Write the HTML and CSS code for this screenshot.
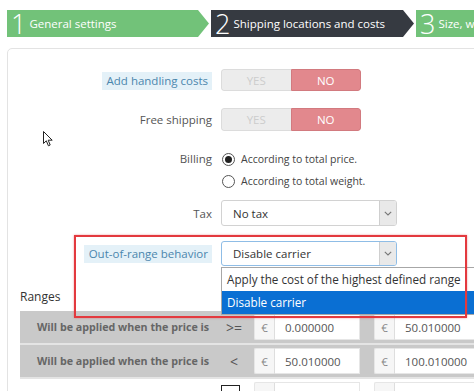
FILE: index.html
```html
<!DOCTYPE html>
<html>
<head>
<meta charset="utf-8">
<link rel="stylesheet" href="styles.css">
</head>
<body>
<div class="steps">
  <div class="step step-done step-first"><span class="num">1</span><span class="lbl">General settings</span></div>
  <div class="step step-cur"><span class="num">2</span><span class="lbl">Shipping locations and costs</span></div>
  <div class="step step-done step-last"><span class="num">3</span><span class="lbl">Size, w</span></div>
</div>

<div class="panel">
  <div class="row row-handling">
    <div class="lab"><span class="hint">Add handling costs</span></div>
    <div class="ctl"><div class="switch"><span class="yes">YES</span><span class="no">NO</span></div></div>
  </div>
  <div class="row row-free">
    <div class="lab">Free shipping</div>
    <div class="ctl"><div class="switch"><span class="yes">YES</span><span class="no">NO</span></div></div>
  </div>
  <div class="row row-billing">
    <div class="lab lab-top">Billing</div>
    <div class="ctl radios">
      <label class="radio"><span class="dot checked"></span>According to total price.</label>
      <label class="radio"><span class="dot"></span>According to total weight.</label>
    </div>
  </div>
  <div class="row row-tax">
    <div class="lab">Tax</div>
    <div class="ctl"><div class="select"><span class="val">No tax</span><span class="caret"><svg width="8" height="5" viewBox="0 0 8 5"><path d="M0.8 0.8 L4 4 L7.2 0.8" fill="none" stroke="#777" stroke-width="1.1"/></svg></span></div></div>
  </div>
  <div class="row row-oor">
    <div class="lab"><span class="hint">Out-of-range behavior</span></div>
    <div class="ctl">
      <div class="select select-focus"><span class="val">Disable carrier</span><span class="caret"><svg width="8" height="5" viewBox="0 0 8 5"><path d="M0.8 0.8 L4 4 L7.2 0.8" fill="none" stroke="#777" stroke-width="1.1"/></svg></span>
        <div class="dropdown">
          <div class="opt">Apply the cost of the highest defined range</div>
          <div class="opt opt-sel">Disable carrier</div>
        </div>
      </div>
    </div>
  </div>

  <div class="ranges-title">Ranges</div>
  <div class="ranges">
    <div class="rrow">
      <div class="rlab">Will be applied when the price is</div>
      <div class="rop">&gt;=</div>
      <div class="igroup"><span class="addon">€</span><span class="inp">0.000000</span></div>
      <div class="igroup ig2"><span class="addon">€</span><span class="inp">50.010000</span></div>
    </div>
    <div class="rrow">
      <div class="rlab">Will be applied when the price is</div>
      <div class="rop">&lt;</div>
      <div class="igroup"><span class="addon">€</span><span class="inp">50.010000</span></div>
      <div class="igroup ig2"><span class="addon">€</span><span class="inp">100.010000</span></div>
    </div>
    <div class="rrow rrow-plain">
      <div class="rlab"></div>
      <div class="rop rop-check"><span class="check"></span></div>
      <div class="igroup"><span class="addon"></span><span class="inp"></span></div>
      <div class="igroup ig2"><span class="addon"></span><span class="inp"></span></div>
    </div>
  </div>
</div>

<div class="annot"></div>
<svg class="cursor" width="11" height="16" viewBox="0 0 11 16"><path d="M0.5 0.5 L0.5 12.5 L3.3 9.8 L5.4 14.8 L7.2 14 L5.2 9.2 L9.2 9.2 Z" fill="#fff" stroke="#222" stroke-width="1"/></svg>
</body>
</html>
```

FILE: styles.css
```css
html, body {
  margin: 0;
  padding: 0;
  overflow: hidden;
  background: #fff;
}
body {
  font-family: "Open Sans", "Liberation Sans", sans-serif;
  font-size: 11.5px;
  color: #555;
  width: 474px;
  height: 391px;
  position: relative;
}

/* steps */
.steps {
  display: flex;
  gap: 1px;
  padding: 10px 0 0 7px;
  height: 27px;
  white-space: nowrap;
}
.step {
  flex: none;
  height: 27px;
  display: flex;
  align-items: center;
  color: #fff;
  padding-left: 4px;
  box-sizing: border-box;
  clip-path: polygon(0 0, calc(100% - 11px) 0, 100% 50%, calc(100% - 11px) 100%, 0 100%);
}
.step-done { background: #72c279; }
.step-cur { background: #363a41; }
.step-first { width: 202px; }
.step-cur { width: 203px; margin-left: 1px; }
.step-last { width: 60px; clip-path: none; margin-left: 1px; }
.num {
  font-size: 27px;
  font-weight: 300;
  line-height: 27px;
  margin-right: 3px;
}
.lbl { font-size: 11.5px; }

/* panel */
.panel {
  margin: 11px 0 0 7px;
  width: 520px;
  border: 1px solid #e3e3e3;
  border-radius: 5px;
  padding-top: 20px;
  height: 400px;
  box-sizing: border-box;
}
.row {
  display: flex;
  align-items: center;
}
.lab {
  width: 204px;
  text-align: right;
  color: #555;
  flex: none;
}
.lab-top { align-self: flex-start; line-height: 22px; }
.ctl { margin-left: 9px; }
.hint {
  background: #e4f1f8;
  color: #4b86ad;
  padding: 1px 4px 2px 5px;
}
.row-handling { height: 22px; }
.row-free { height: 23px; margin-top: 17px; }
.row-billing { margin-top: 17px; align-items: flex-start; }
.row-tax { height: 26px; margin-top: 8px; }
.row-oor { height: 25px; margin-top: 15px; }

.switch {
  display: flex;
  width: 140px;
  height: 22px;
  border-radius: 3px;
  overflow: hidden;
  font-size: 11.5px;
}
.row-free .switch { height: 23px; }
.switch .yes {
  flex: 1;
  background: #ececec;
  color: #cdcdcd;
  border: 1px solid #dcdcdc;
  border-right: none;
  border-radius: 3px 0 0 3px;
  display: flex; align-items: center; justify-content: center;
}
.switch .no {
  flex: 1;
  background: #e2888d;
  color: #fff;
  border: 1px solid #d27a7f;
  border-radius: 0 3px 3px 0;
  display: flex; align-items: center; justify-content: center;
}

.radios { display: flex; flex-direction: column; }
.radio {
  display: flex;
  align-items: center;
  height: 22px;
  color: #444;
  font-size: 10.5px;
}
.dot {
  width: 11px;
  height: 11px;
  border: 1px solid #555;
  border-radius: 50%;
  margin: 0 6px 0 1px;
  position: relative;
  background: #fff;
}
.dot.checked::after {
  content: "";
  position: absolute;
  left: 2px; top: 2px;
  width: 7px; height: 7px;
  border-radius: 50%;
  background: #222;
}

.select {
  position: relative;
  width: 176px;
  height: 26px;
  box-sizing: border-box;
  border: 1px solid #d2d2d2;
  border-radius: 3px;
  background: #fff;
  display: flex;
  align-items: center;
  color: #333;
}
.row-oor .select { height: 25px; }
.select .val { flex: 1; padding-left: 11px; }
.select .caret {
  width: 16px;
  height: 100%;
  background: #e9e9e9;
  border-left: 1px solid #cfcfcf;
  display: flex; align-items: center; justify-content: center;
  border-radius: 0 2px 2px 0;
}
.select-focus { border-color: #8fbde6; }
.dropdown {
  position: absolute;
  left: -1px;
  top: 25px;
  width: 256px;
  background: #fff;
  border: 1px solid #a7a7a7;
  border-right: none;
  font-size: 11.7px;
  color: #333;
}
.opt { height: 23px; line-height: 23px; padding-left: 5px; white-space: nowrap; }
.opt-sel { background: #0a6fd3; color: #fff; }

/* ranges */
.ranges-title {
  margin: 23px 0 0 12px;
  line-height: 16px;
  color: #333;
  font-size: 12px;
}
.ranges {
  margin: 6px 0 0 12px;
}
.rrow {
  display: flex;
  align-items: center;
  height: 32px;
  background: #c9c9c9;
  border-bottom: 2px solid #e4e4e4;
}
.rrow-plain { background: #fff; border: none; align-items: flex-start; padding-top: 3px; }
.rlab {
  width: 179px;
  padding-left: 17px;
  font-weight: 700;
  font-size: 10.7px;
  color: #666;
  flex: none;
  white-space: nowrap;
}
.rop {
  width: 36px;
  flex: none;
  text-align: center;
  color: #555;
  font-size: 14px;
}
.rop-check { text-align: left; }
.igroup {
  display: flex;
  height: 26px;
  margin-left: 2px;
  flex: none;
}
.ig2 { margin-left: 14px; }
.addon {
  width: 19px;
  background: #f6f6f6;
  color: #888;
  border: 1px solid #e6e6e6;
  border-right: 1px solid #dedede;
  display: flex; align-items: center; justify-content: center;
  border-radius: 2px 0 0 2px;
}
.inp {
  width: 74px;
  background: #fff;
  border: 1px solid #e6e6e6;
  border-left: none;
  padding-left: 10px;
  display: flex; align-items: center;
  color: #555;
}
.ig2 .inp { width: 90px; }
.check {
  display: inline-block;
  width: 17px; height: 17px;
  border: 1.5px solid #222;
  margin-top: 3px;
  margin-left: 5px;
}

/* overlays */
.annot {
  position: absolute;
  left: 74px;
  top: 235px;
  width: 389px;
  height: 79px;
  border: 2px solid #e3393e;
  box-shadow: 0 0 2px rgba(227, 57, 62, 0.5);
}
.cursor {
  position: absolute;
  left: 43px;
  top: 131px;
}
```
